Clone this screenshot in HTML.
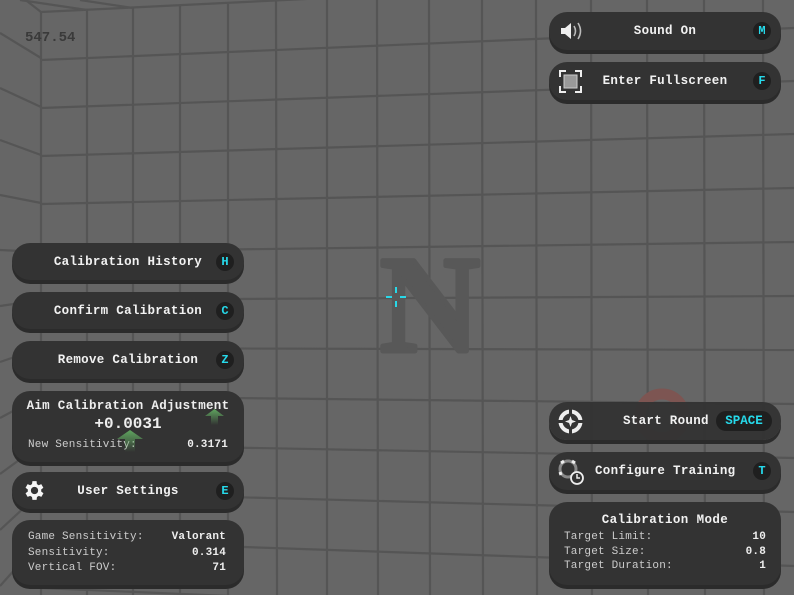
<!DOCTYPE html>
<html><head><meta charset="utf-8"><style>
html,body{margin:0;padding:0;width:794px;height:595px;overflow:hidden;}
body{background:#666;position:relative;font-family:"Liberation Mono",monospace;font-weight:bold;color:#eee;}
svg.bg{position:absolute;left:0;top:0;}
.p{position:absolute;background:#333;border-radius:18px;box-shadow:0 4px 0 #2b2b2b;}
.btn{display:flex;align-items:center;justify-content:center;font-size:12.5px;letter-spacing:0.3px;color:#f2f2f2;}
.k{position:absolute;right:10px;top:50%;margin-top:-9px;width:18px;height:18px;border-radius:9px;background:#1f1f1f;color:#26d9ea;font-size:12px;line-height:18px;text-align:center;letter-spacing:0;}
.row{display:flex;justify-content:space-between;font-size:11px;line-height:14.5px;letter-spacing:0.2px;}
.row span:first-child{color:#ccc;font-weight:normal;}
.t{position:absolute;top:0;line-height:38px;font-size:12.5px;letter-spacing:0.3px;color:#f2f2f2;}
</style></head><body>
<svg class="bg" width="794" height="595">
<g stroke="#555" stroke-width="2.2" fill="none">
<line x1="41" y1="12" x2="41" y2="595"/>
<line x1="87" y1="10" x2="87" y2="595"/>
<line x1="133" y1="8" x2="133" y2="595"/>
<line x1="180" y1="6" x2="180" y2="595"/>
<line x1="228" y1="4" x2="228" y2="595"/>
<line x1="276" y1="0" x2="277" y2="595"/>
<line x1="327" y1="0" x2="327" y2="595"/>
<line x1="377" y1="0" x2="378" y2="595"/>
<line x1="429" y1="0" x2="430" y2="595"/>
<line x1="482" y1="0" x2="483" y2="595"/>
<line x1="536" y1="0" x2="537" y2="595"/>
<line x1="591" y1="0" x2="592" y2="595"/>
<line x1="647" y1="0" x2="648" y2="595"/>
<line x1="704" y1="0" x2="705" y2="595"/>
<line x1="763" y1="0" x2="764" y2="595"/>
<line x1="41" y1="12" x2="794" y2="-25"/>
<line x1="41" y1="60" x2="794" y2="28"/>
<line x1="41" y1="108" x2="794" y2="81"/>
<line x1="41" y1="156" x2="794" y2="134"/>
<line x1="41" y1="204" x2="794" y2="188"/>
<line x1="41" y1="252" x2="794" y2="242"/>
<line x1="41" y1="300" x2="794" y2="296"/>
<line x1="41" y1="348" x2="794" y2="350"/>
<line x1="41" y1="396" x2="794" y2="404"/>
<line x1="41" y1="444" x2="794" y2="458"/>
<line x1="41" y1="492" x2="794" y2="512"/>
<line x1="41" y1="540" x2="794" y2="566"/>
<line x1="41" y1="588" x2="794" y2="620"/>
<line x1="0" y1="-20" x2="41" y2="12"/>
<line x1="0" y1="33" x2="41" y2="58"/>
<line x1="0" y1="88" x2="41" y2="107"/>
<line x1="0" y1="140" x2="41" y2="155"/>
<line x1="0" y1="195" x2="41" y2="203"/>
<line x1="0" y1="250" x2="41" y2="252"/>
<line x1="0" y1="306" x2="41" y2="300"/>
<line x1="0" y1="362" x2="41" y2="348"/>
<line x1="0" y1="418" x2="41" y2="396"/>
<line x1="0" y1="474" x2="41" y2="444"/>
<line x1="0" y1="530" x2="41" y2="492"/>
<line x1="0" y1="586" x2="41" y2="540"/>
<line x1="20" y1="0" x2="87" y2="10"/>
<line x1="80" y1="0" x2="133" y2="8"/>
</g>
<text x="430" y="351" text-anchor="middle" font-family="'Liberation Serif',serif" font-weight="bold" font-size="138" fill="#585858" stroke="#585858" stroke-width="5" stroke-linejoin="round">N</text>
<circle cx="662" cy="416" r="22" fill="none" stroke="#7d5552" stroke-width="11"/>
<g stroke="#29d8e8" stroke-width="2">
<line x1="396" y1="287" x2="396" y2="293"/><line x1="396" y1="301" x2="396" y2="307"/>
<line x1="386" y1="297" x2="392" y2="297"/><line x1="400" y1="297" x2="406" y2="297"/>
</g>
<text x="25" y="41" font-family="'Liberation Mono',monospace" font-weight="bold" font-size="14" fill="#3a3a3a">547.54</text>
</svg>

<!-- right top -->
<div class="p btn" style="left:549px;top:12px;width:232px;height:38px;">Sound On
<svg style="position:absolute;left:10px;top:9px" width="26" height="20"><path d="M2 7h4l6-5v16l-6-5H2z" fill="#eee"/><path d="M15 5q3 5 0 10M19 2q5 8 0 16" stroke="#bbb" stroke-width="1.6" fill="none"/></svg>
<span class="k">M</span></div>
<div class="p btn" style="left:549px;top:62px;width:232px;height:38px;">Enter Fullscreen
<svg style="position:absolute;left:10px;top:8px" width="23" height="23"><path d="M1 7V1h6M16 1h6v6M22 16v6h-6M7 22H1v-6" stroke="#eee" stroke-width="2" fill="none"/><rect x="5" y="5" width="13" height="13" fill="#999" stroke="#ccc"/></svg>
<span class="k">F</span></div>

<!-- right bottom -->
<div class="p" style="left:549px;top:402px;width:232px;height:38px;background:rgba(51,51,51,0.96);"><span class="t" style="left:74px">Start Round</span>
<svg style="position:absolute;left:9px;top:7px" width="25" height="25"><circle cx="12.5" cy="12.5" r="10" fill="none" stroke="#eee" stroke-width="4"/><path d="M12.5 0v25M0 12.5h25" stroke="#333" stroke-width="3"/><path d="M12.5 7l2 5.5-2 5.5-2-5.5zM7 12.5l5.5-2 5.5 2-5.5 2z" fill="#eee"/></svg>
<span style="position:absolute;right:9px;top:9px;width:56px;height:20px;border-radius:10px;background:#1f1f1f;color:#26d9ea;font-size:12.5px;line-height:20px;text-align:center;letter-spacing:0">SPACE</span></div>
<div class="p" style="left:549px;top:452px;width:232px;height:38px;"><span class="t" style="left:46px">Configure Training</span>
<svg style="position:absolute;left:8px;top:6px" width="28" height="28"><circle cx="11" cy="11" r="8" fill="none" stroke="#888" stroke-width="3"/><path d="M4 5l3-2M15 3l3 2M3 14l1 3" stroke="#eee" stroke-width="3"/><circle cx="20" cy="20" r="6" fill="#333" stroke="#eee" stroke-width="1.8"/><path d="M20 16v4h3" stroke="#eee" stroke-width="1.5" fill="none"/></svg>
<span class="k">T</span></div>
<div class="p" style="left:549px;top:502px;width:232px;height:83px;">
<div style="text-align:center;font-size:12.5px;letter-spacing:0.4px;margin-top:11px;color:#f2f2f2">Calibration Mode</div>
<div style="padding:3px 15px 0 15px;">
<div class="row"><span>Target Limit:</span><span>10</span></div>
<div class="row"><span>Target Size:</span><span>0.8</span></div>
<div class="row"><span>Target Duration:</span><span>1</span></div>
</div></div>

<!-- left -->
<div class="p btn" style="left:12px;top:243px;width:232px;height:37px;">Calibration History<span class="k">H</span></div>
<div class="p btn" style="left:12px;top:292px;width:232px;height:37px;">Confirm Calibration<span class="k">C</span></div>
<div class="p btn" style="left:12px;top:341px;width:232px;height:38px;">Remove Calibration<span class="k">Z</span></div>
<div class="p" style="left:12px;top:391px;width:232px;height:71px;">
<div style="text-align:center;font-size:12.5px;letter-spacing:0.3px;margin-top:8px;">Aim Calibration Adjustment</div>
<div style="text-align:center;font-size:16px;margin-top:2px;">+0.0031</div>
<div class="row" style="padding:0 16px;margin-top:5px;"><span>New Sensitivity:</span><span>0.3171</span></div>
<svg style="position:absolute;left:105px;top:39px" width="26" height="22"><defs><linearGradient id="g" x1="0" y1="0" x2="0" y2="1"><stop offset="0" stop-color="#5fa55f"/><stop offset="1" stop-color="#5fa55f" stop-opacity="0"/></linearGradient></defs><path d="M13 0L26 9H18V22H8V9H0z" fill="url(#g)"/></svg>
<svg style="position:absolute;left:193px;top:18px" width="19" height="16"><path d="M9.5 0L19 7H13V16H6V7H0z" fill="url(#g)"/></svg>
</div>
<div class="p btn" style="left:12px;top:472px;width:232px;height:37px;">User Settings
<svg style="position:absolute;left:10px;top:6px" width="25" height="25" viewBox="0 0 24 24"><path fill="#f5f5f5" d="M19.4 13a7.5 7.5 0 0 0 0-2l2.1-1.6-2-3.5-2.5 1a7.3 7.3 0 0 0-1.700-1L15 3h-4l-.4 2.9a7.3 7.3 0 0 0-1.7 1l-2.5-1-2 3.5L6.6 11a7.5 7.5 0 0 0 0 2l-2.2 1.6 2 3.5 2.5-1a7.3 7.3 0 0 0 1.7 1L11 21h4l.4-2.9a7.3 7.3 0 0 0 1.7-1l2.5 1 2-3.5zM13 15.5a3.5 3.5 0 1 1 0-7 3.5 3.5 0 0 1 0 7z" transform="translate(-1 0)"/></svg>
<span class="k">E</span></div>
<div class="p" style="left:12px;top:520px;width:232px;height:65px;">
<div style="padding:10px 18px 0 16px;">
<div class="row" style="line-height:15.5px"><span>Game Sensitivity:</span><span>Valorant</span></div>
<div class="row" style="line-height:15.5px"><span>Sensitivity:</span><span>0.314</span></div>
<div class="row" style="line-height:15.5px"><span>Vertical FOV:</span><span>71</span></div>
</div></div>
</body></html>
